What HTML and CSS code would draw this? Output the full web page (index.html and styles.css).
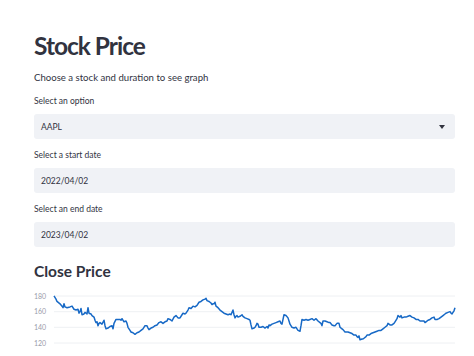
FILE: index.html
```html
<!DOCTYPE html>
<html>
<head>
<meta name="viewport" content="width=device-width, initial-scale=1">
<link rel="stylesheet" href="styles.css">
</head>
<body>
<div class="main">
  <h1 class="title">Stock Price</h1>
  <p class="intro">Choose a stock and duration to see graph</p>

  <div class="field">
    <label class="field-label">Select an option</label>
    <div class="box select-box">
      <span>AAPL</span>
      <span class="caret"></span>
    </div>
  </div>

  <div class="field">
    <label class="field-label">Select a start date</label>
    <div class="box">2022/04/02</div>
  </div>

  <div class="field">
    <label class="field-label">Select an end date</label>
    <div class="box">2023/04/02</div>
  </div>

  <h3 class="sub-title">Close Price</h3>

  <svg class="chart" width="421" height="70" viewBox="0 0 421 70">
    <g class="grid">
      <line x1="20" y1="8" x2="421" y2="8"/>
      <line x1="20" y1="23.7" x2="421" y2="23.7"/>
      <line x1="20" y1="39.3" x2="421" y2="39.3"/>
      <line x1="20" y1="55" x2="421" y2="55"/>
    </g>
    <g class="axis">
      <text x="0" y="10.5">180</text>
      <text x="0" y="26.2">160</text>
      <text x="0" y="41.8">140</text>
      <text x="0" y="57.5">120</text>
    </g>
    <!-- x is page px, y is price: mapped by the matrix -->
    <polyline class="line" vector-effect="non-scaling-stroke" transform="matrix(1 0 0 -0.783 -34 148.9)"
      points="54,180 56,176 57,173 60,170 62,167 63,165 64,170 65,166 67,165 70,166 72,167 74,163 76,162 78,163 79,158 80,160 81,164 82,156 84,157 85,159 87,157 88,165 89,158 91,157 92,155 94,153 95,149 96,146 97,147 98,142 99,145 100,146 102,144 104,149 105,142 106,138 108,139 110,141 112,142 113,138 114,145 116,150 118,150 120,150 121,149 122,151 124,147 126,148 127,145 128,140 130,136 131,134 133,133 135,131 137,133 139,134 141,136 143,138 145,142 147,142 148,139 149,137 151,139 153,140 155,142 157,143 159,146 161,147 163,145 165,147 167,148 168,151 170,150 172,148 174,153 176,155 178,152 180,152 182,156 183,158 185,157 186,158 188,162 189,165 191,164 193,167 195,166 197,168 199,172 201,173 203,175 205,176 206,177 207,174 209,173 210,172 211,171 212,169 213,170 214,170 215,172 216,167 218,165 220,162 222,160 224,158 226,157 228,156 230,157 231,156 233,162 234,156 235,152 236,154 237,155 238,153 240,154 242,156 243,154 245,152 247,151 249,150 250,149 251,143 252,138 254,139 255,140 256,142 257,145 258,144 259,140 261,140 263,141 265,139 266,140 267,141 268,139 269,143 270,142 272,144 274,145 276,146 278,147 280,148 281,145 282,144 283,150 284,156 286,155 288,152 289,148 290,144 292,140 294,139 296,140 297,138 298,136 300,135 301,142 302,150 304,149 306,150 308,149 310,150 312,151 314,149 316,151 318,148 320,146 321,145 322,142 323,148 325,148 327,147 329,146 330,146 332,143 334,142 335,142 337,145 339,145 340,140 342,138 343,137 345,134 346,134 348,134 350,133 352,132 354,130 356,130 357,128 358,127 359,129 360,124 362,125 363,125 364,126 366,128 367,130 369,130 371,132 373,133 375,134 377,135 379,136 381,136 383,138 385,140 387,142 388,145 390,143 392,143 394,145 395,147 397,151 398,155 400,153 401,155 402,152 404,153 406,153 408,154 410,155 412,153 414,152 416,150 418,150 420,148 422,148 424,148 425,146 426,147 428,149 430,150 432,152 434,153 435,150 437,150 439,151 441,153 443,155 445,157 446,158 448,159 450,160 451,158 452,157 454,161 455,165"/>
  </svg>
</div>
</body>
</html>
```

FILE: styles.css
```css
* {
  box-sizing: border-box;
}

body {
  margin: 0;
  background: #fff;
  color: #31333f;
  font-family: Lato, "Noto Sans", sans-serif;
}

.main {
  padding: 32px 19px 0 34px;
}

.title {
  margin: 0;
  font-size: 24.5px;
  font-weight: 700;
  line-height: 28px;
  letter-spacing: -1px;
}

.intro {
  margin: 12px 0 0 0;
  font-size: 9.6px;
  line-height: 12px;
}

.field {
  margin-top: 11px;
}

.field:first-of-type {
  margin-top: 12px;
}

.field-label {
  display: block;
  font-size: 8.5px;
  line-height: 11px;
  margin-bottom: 7px;
}

.box {
  height: 25px;
  background: #f0f2f6;
  border-radius: 3px;
  padding: 0 7px;
  display: flex;
  align-items: center;
  font-size: 8.5px;
}

.select-box {
  justify-content: space-between;
}

.caret {
  width: 0;
  height: 0;
  border-left: 3px solid transparent;
  border-right: 3px solid transparent;
  border-top: 4px solid #31333f;
  margin-right: 3px;
}

.sub-title {
  margin: 14px 0 0 0;
  font-size: 15.5px;
  font-weight: 700;
  line-height: 20px;
}

.chart {
  display: block;
  margin-top: 7px;
  overflow: visible;
}

.grid line {
  stroke: #eef0f3;
  stroke-width: 1;
}

.axis text {
  font-size: 7px;
  fill: #9a9caa;
  font-family: Lato, "Noto Sans", sans-serif;
}

.line {
  fill: none;
  stroke: #1769c6;
  stroke-width: 1.5;
  stroke-linejoin: round;
}
```
